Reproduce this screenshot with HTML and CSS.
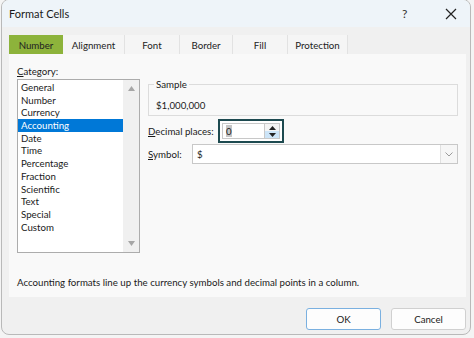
FILE: index.html
```html
<!DOCTYPE html>
<html lang="en">
<head>
    <meta charset="UTF-8">
    <title>Format Cells</title>
    <link rel="stylesheet" href="styles.css">
</head>
<body>
    <div class="window">
        <div class="titlebar">
            <span class="title">Format Cells</span>
            <span class="help">?</span>
            <span class="close">
                <svg width="12" height="12" viewBox="0 0 12 12"><path d="M1 1 L11 11 M11 1 L1 11" stroke="#222" stroke-width="1.2" fill="none"/></svg>
            </span>
        </div>

        <div class="dialog">
            <div class="tabs">
                <div class="tab active" style="width:54px">Number</div>
                <div class="tab" style="width:62px">Alignment</div>
                <div class="tab" style="width:55px">Font</div>
                <div class="tab" style="width:53px">Border</div>
                <div class="tab" style="width:55px">Fill</div>
                <div class="tab" style="width:60px">Protection</div>
            </div>

            <div class="panel">
                <div class="main">
                    <div class="category">
                        <div class="label"><u>C</u>ategory:</div>
                        <div class="listbox">
                            <ul class="items">
                                <li>General</li>
                                <li>Number</li>
                                <li>Currency</li>
                                <li class="selected">Accounting</li>
                                <li>Date</li>
                                <li>Time</li>
                                <li>Percentage</li>
                                <li>Fraction</li>
                                <li>Scientific</li>
                                <li>Text</li>
                                <li>Special</li>
                                <li>Custom</li>
                            </ul>
                            <div class="scrollbar">
                                <svg width="7" height="5" viewBox="0 0 7 5"><path d="M0 5 L3.5 0 L7 5 Z" fill="#a6a6a6"/></svg>
                                <svg width="7" height="5" viewBox="0 0 7 5"><path d="M0 0 L3.5 5 L7 0 Z" fill="#a6a6a6"/></svg>
                            </div>
                        </div>
                    </div>

                    <div class="details">
                        <fieldset class="sample">
                            <legend>Sample</legend>
                            <div class="sample-value">$1,000,000</div>
                        </fieldset>

                        <div class="row decimals">
                            <span class="row-label"><u>D</u>ecimal places:</span>
                            <div class="spinner">
                                <span class="spin-value"><span class="sel">0</span></span>
                                <div class="spin-buttons">
                                    <div class="spin-btn">
                                        <svg width="7" height="4" viewBox="0 0 7 4"><path d="M0 4 L3.5 0 L7 4 Z" fill="#222"/></svg>
                                    </div>
                                    <div class="spin-btn down">
                                        <svg width="7" height="4" viewBox="0 0 7 4"><path d="M0 0 L3.5 4 L7 0 Z" fill="#222"/></svg>
                                    </div>
                                </div>
                            </div>
                        </div>

                        <div class="row symbol">
                            <span class="row-label"><u>S</u>ymbol:</span>
                            <div class="combo">
                                <span class="combo-value">$</span>
                                <div class="combo-btn">
                                    <svg width="8" height="5" viewBox="0 0 8 5"><path d="M0.5 0.5 L4 4 L7.5 0.5" stroke="#9a9a9a" stroke-width="1" fill="none"/></svg>
                                </div>
                            </div>
                        </div>
                    </div>
                </div>

                <p class="desc">Accounting formats line up the currency symbols and decimal points in a column.</p>
            </div>

            <div class="buttons">
                <button class="btn default">OK</button>
                <button class="btn">Cancel</button>
            </div>
        </div>
    </div>
</body>
</html>
```

FILE: styles.css
```css
* {
    margin: 0;
    padding: 0;
    box-sizing: border-box;
}

body {
    font-family: Lato, "Noto Sans", sans-serif;
    font-size: 9.7px;
    color: #1a1a1a;
    background-color: #f4f4f4;
    width: 474px;
    height: 338px;
    overflow: hidden;
}

.window {
    width: 470px;
    height: 336px;
    margin: -1px 0 0 1px;
    border: 1px solid #b9b9b9;
    border-radius: 8px;
    overflow: hidden;
    background-color: #f0f0f0;
}

/* title bar */
.titlebar {
    height: 27px;
    display: flex;
    align-items: center;
    background-color: #eef4f9;
    padding-left: 7px;
}

.title {
    font-size: 11px;
    flex: 1;
}

.help {
    font-size: 12px;
    color: #333;
    width: 16px;
    margin-right: 27px;
}

.close {
    width: 25px;
    display: flex;
}

/* dialog body */
.dialog {
    padding: 8px 4px 0 7px;
}

.tabs {
    display: flex;
    height: 19px;
}

.tab {
    display: flex;
    align-items: center;
    justify-content: center;
    background-color: #f5f5f5;
    border-right: 1px solid #e2e2e2;
    color: #222;
}

.tab.active {
    background-color: #8db33b;
    border-right: none;
}

.panel {
    height: 243px;
    background-color: #f9f9f9;
    padding: 10px 0 0 8px;
}

.main {
    display: flex;
    height: 200px;
}

.category {
    width: 131px;
}

.label {
    line-height: 14px;
    margin-bottom: 1px;
}

.listbox {
    width: 123px;
    height: 174px;
    border: 1px solid #acacac;
    background-color: #fff;
    display: flex;
}

.items {
    list-style: none;
    flex: 1;
    padding-top: 1px;
}

.items li {
    height: 12.7px;
    line-height: 12.7px;
    padding-left: 3px;
}

.items li.selected {
    background-color: #0078d7;
    color: #fff;
}

.scrollbar {
    width: 16px;
    background-color: #f0f0f0;
    display: flex;
    flex-direction: column;
    align-items: center;
    justify-content: space-between;
    padding: 6px 0 6px;
}

.details {
    flex: 1;
    padding-right: 8px;
}

.sample {
    border: 1px solid #dcdcdc;
    margin-top: 13px;
    height: 39px;
    padding: 0 0 0 7px;
}

.sample legend {
    padding: 0 2px;
    margin-left: -2px;
    line-height: 14px;
}

.sample-value {
    line-height: 14px;
    padding-top: 7px;
}

.row {
    display: flex;
    align-items: center;
}

.row-label {
    white-space: nowrap;
}

.decimals {
    margin-top: 3px;
    height: 24px;
}

.decimals .row-label {
    width: 70px;
}

.spinner {
    width: 66px;
    height: 24px;
    border: 2px solid #1d4a50;
    display: flex;
    align-items: center;
    padding: 2px;
    background-color: #fff;
}

.spin-value {
    flex: 1;
    align-self: stretch;
    border: 1px solid #c8c8c8;
    border-right: none;
    line-height: 14px;
    padding-left: 3px;
}

.spin-value .sel {
    background-color: #c6c6c6;
}

.spin-buttons {
    width: 16px;
    align-self: stretch;
    display: flex;
    flex-direction: column;
    border: 1px solid #c8c8c8;
}

.spin-btn {
    flex: 1;
    display: flex;
    align-items: center;
    justify-content: center;
    background-color: #f4f4f4;
}

.spin-btn.down {
    background-color: #cce4f7;
}

.symbol {
    margin-top: 1px;
    height: 20px;
}

.symbol .row-label {
    width: 44px;
}

.combo {
    flex: 1;
    height: 20px;
    border: 1px solid #c8c8c8;
    background-color: #fff;
    display: flex;
    align-items: center;
}

.combo-value {
    flex: 1;
    padding-left: 4px;
}

.combo-btn {
    width: 17px;
    height: 100%;
    border-left: 1px solid #e0e0e0;
    background-color: #f6f6f6;
    display: flex;
    align-items: center;
    justify-content: center;
}

.desc {
    margin-top: 11px;
    line-height: 14px;
}

.buttons {
    display: flex;
    justify-content: flex-end;
    gap: 10px;
    margin-top: 11px;
}

.btn {
    width: 75px;
    height: 22px;
    font-family: inherit;
    font-size: 9.7px;
    color: #1a1a1a;
    background-color: #fdfdfd;
    border: 1px solid #d0d0d0;
    border-radius: 3px;
}

.btn.default {
    border-color: #7ab0e0;
}
```
